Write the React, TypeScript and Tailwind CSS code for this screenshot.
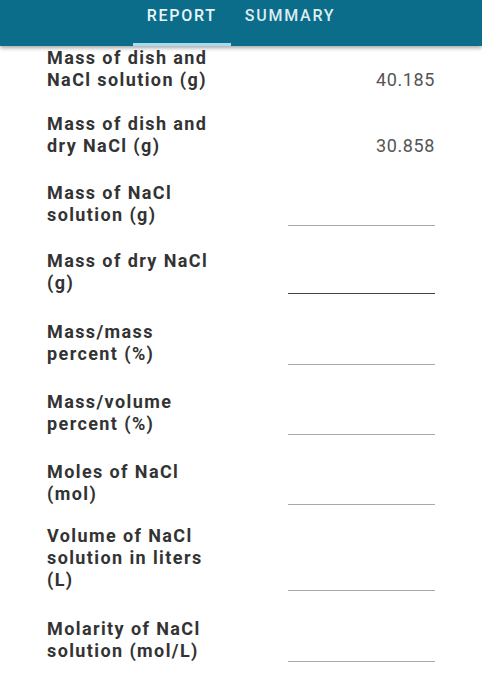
import React from 'react';

type Row = {
  label: string;
  value?: string;
  focused?: boolean;
  mt: string;
};

const rows: Row[] = [
  { label: 'Mass of dish and NaCl solution (g)', value: '40.185', mt: 'mt-[1px]' },
  { label: 'Mass of dish and dry NaCl (g)', value: '30.858', mt: 'mt-[22px]' },
  { label: 'Mass of NaCl solution (g)', mt: 'mt-[25px]' },
  { label: 'Mass of dry NaCl (g)', focused: true, mt: 'mt-[24px]' },
  { label: 'Mass/mass percent (%)', mt: 'mt-[27px]' },
  { label: 'Mass/volume percent (%)', mt: 'mt-[26px]' },
  { label: 'Moles of NaCl (mol)', mt: 'mt-[26px]' },
  { label: 'Volume of NaCl solution in liters (L)', mt: 'mt-[20px]' },
  { label: 'Molarity of NaCl solution (mol/L)', mt: 'mt-[27px]' },
];

const tabs = ['Report', 'Summary'];

export default function App() {
  return (
    <div className="w-[482px] h-[700px] bg-white overflow-hidden font-['Roboto',_'Liberation_Sans',_sans-serif]">
      {/* Tab bar */}
      <header className="relative z-10 h-[46px] bg-[#0b6d8a] shadow-[0_2px_4px_rgba(0,0,0,0.35)] flex justify-center">
        {tabs.map((tab, i) => (
          <div
            key={tab}
            className={`relative h-full px-[14px] pt-[6px] text-[16px] font-medium uppercase tracking-[1.75px] leading-[20px] ${
              i === 0 ? 'text-[#e8f4f8]' : 'text-[#dcecf1]'
            }`}
          >
            {tab}
            {i === 0 && <span className="absolute left-0 right-0 bottom-0 h-[3px] bg-[#a6dbf1]" />}
          </div>
        ))}
      </header>

      {/* Form rows */}
      <div className="flex flex-col pl-[47px] pr-[47px]">
        {rows.map((row) => (
          <div key={row.label} className={`flex items-end justify-between ${row.mt}`}>
            <div className="w-[172px] text-[18px] font-bold leading-[22px] tracking-[1.4px] text-[#333]">
              {row.label}
            </div>
            {row.value ? (
              <div className="text-[18px] leading-[22px] tracking-[0.6px] text-[#555]">{row.value}</div>
            ) : (
              <div
                className={`w-[147px] h-[10px] border-b ${
                  row.focused ? 'border-[#444]' : 'border-[#aaa]'
                }`}
              />
            )}
          </div>
        ))}
      </div>
    </div>
  );
}
